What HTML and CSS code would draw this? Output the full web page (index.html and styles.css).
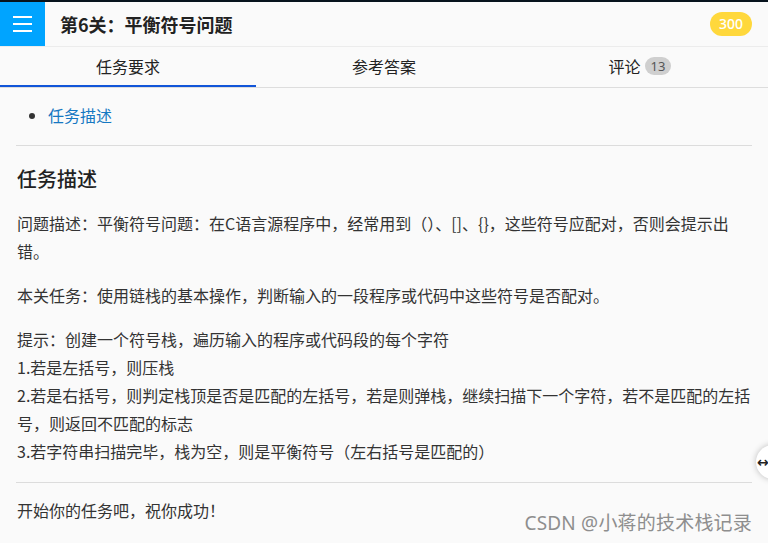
FILE: index.html
```html
<!DOCTYPE html>
<html lang="zh-CN">
<head>
<meta charset="utf-8">
<title>第6关：平衡符号问题</title>
<link rel="stylesheet" href="styles.css">
</head>
<body>
<div class="topstrip"></div>
<header class="header">
  <div class="menu-btn">
    <span class="bar"></span><span class="bar"></span><span class="bar"></span>
  </div>
  <h1 class="title">第6关：平衡符号问题</h1>
  <span class="score">300</span>
</header>
<nav class="tabs">
  <div class="tab active">任务要求</div>
  <div class="tab">参考答案</div>
  <div class="tab">评论<span class="count">13</span></div>
</nav>
<main class="content">
  <ul class="toc">
    <li><a class="toc-link" href="#desc">任务描述</a></li>
  </ul>
  <hr class="rule">
  <h2 class="heading" id="desc">任务描述</h2>
  <p class="para">问题描述：平衡符号问题：在C语言源程序中，经常用到（）、[]、{}，这些符号应配对，否则会提示出错。</p>
  <p class="para">本关任务：使用链栈的基本操作，判断输入的一段程序或代码中这些符号是否配对。</p>
  <p class="para">提示：创建一个符号栈，遍历输入的程序或代码段的每个字符<br>1.若是左括号，则压栈<br>2.若是右括号，则判定栈顶是否是匹配的左括号，若是则弹栈，继续扫描下一个字符，若不是匹配的左括号，则返回不匹配的标志<br>3.若字符串扫描完毕，栈为空，则是平衡符号（左右括号是匹配的）</p>
  <hr class="rule rule-end">
  <p class="para">开始你的任务吧，祝你成功！</p>
</main>
<div class="side-handle"><span class="arrow">↔</span></div>
<div class="watermark">CSDN @小蒋的技术栈记录</div>
</body>
</html>
```
FILE: styles.css
```css
html, body {
  margin: 0;
  padding: 0;
}
body {
  background: #fafafa;
  font-family: "Noto Sans CJK SC", "Noto Sans", sans-serif;
  color: #333;
  width: 768px;
  height: 543px;
  overflow: hidden;
  position: relative;
}
.topstrip {
  height: 2px;
  background: #07131d;
}
.header {
  height: 44px;
  display: flex;
  align-items: center;
  border-bottom: 1px solid #ececec;
  background: #fafafa;
}
.menu-btn {
  width: 45px;
  height: 44px;
  background: #00a4ff;
  display: flex;
  flex-direction: column;
  justify-content: center;
  align-items: center;
  gap: 5px;
}
.bar {
  display: block;
  width: 19px;
  height: 2px;
  background: #fff;
}
.title {
  margin: 0 0 0 15px;
  font-size: 18px;
  font-weight: 700;
  color: #222;
  flex: 1;
  line-height: 44px;
}
.score {
  background: #ffd83c;
  color: #fff;
  font-size: 14px;
  font-weight: 500;
  font-family: "Noto Sans", sans-serif;
  width: 42px;
  height: 24px;
  line-height: 24px;
  text-align: center;
  border-radius: 12px;
  margin-right: 16px;
}
.tabs {
  display: flex;
  height: 40px;
  border-bottom: 1px solid #ddd;
}
.tab {
  flex: 1;
  display: flex;
  align-items: center;
  justify-content: center;
  font-size: 16px;
  color: #222;
  box-sizing: border-box;
  border-bottom: 2px solid transparent;
}
.tab.active {
  border-bottom-color: #1155d8;
}
.count {
  display: inline-block;
  background: #cfcfcf;
  color: #555;
  font-size: 13px;
  font-family: "Noto Sans", sans-serif;
  height: 18px;
  line-height: 18px;
  padding: 0 6px;
  border-radius: 9px;
  margin-left: 4px;
}
.content {
  padding: 13px 16px 0 16px;
  font-size: 16px;
  line-height: 28px;
}
.toc {
  margin: 0;
  padding-left: 32px;
}
.toc-link {
  color: #1578c2;
  text-decoration: none;
}
.rule {
  border: 0;
  border-top: 1px solid #dcdcdc;
  margin: 16px 0 0 0;
}
.rule-end {
  margin-top: 17px;
}
.heading {
  font-size: 20px;
  font-weight: 500;
  line-height: 30px;
  margin: 18px 0 0 1px;
  color: #222;
}
.para {
  margin: 15px 0 0 1px;
}
.para + .para {
  margin-top: 16px;
}
.rule + .para {
  margin-top: 13px;
}
.side-handle {
  position: absolute;
  left: 756px;
  top: 445px;
  width: 34px;
  height: 34px;
  border-radius: 50%;
  background: #fff;
  box-shadow: 0 0 6px rgba(0,0,0,0.25);
  display: flex;
  align-items: center;
  padding-left: 1px;
  box-sizing: border-box;
}
.arrow {
  font-size: 14px;
  font-weight: 700;
  color: #222;
  font-family: "DejaVu Sans", sans-serif;
}
.watermark {
  position: absolute;
  right: 16px;
  top: 510px;
  font-size: 19px;
  color: #8e8e8e;
  font-family: "Noto Sans", "Noto Sans CJK SC", sans-serif;
  line-height: 26px;
  letter-spacing: 0.2px;
}
```
